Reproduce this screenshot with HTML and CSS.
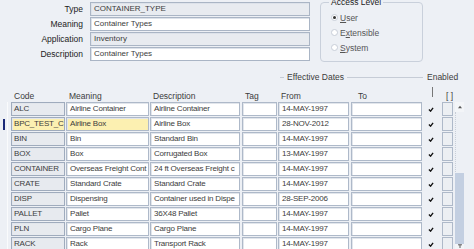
FILE: index.html
```html
<!DOCTYPE html>
<html lang="en">
<head>
  <meta charset="UTF-8">
  <title>Lookups</title>
  <link rel="stylesheet" href="styles.css">
</head>
<body>
  <div class="screen">
    <div class="top">
      <div class="form">
        <label>Type</label><div class="fld ro">CONTAINER_TYPE</div>
        <label>Meaning</label><div class="fld">Container Types</div>
        <label>Application</label><div class="fld ro">Inventory</div>
        <label>Description</label><div class="fld">Container Types</div>
      </div>
      <fieldset class="access">
        <legend>Access Level</legend>
        <div class="radio on"><span class="dot"></span><span><u>U</u>ser</span></div>
        <div class="radio"><span class="dot"></span><span>E<u>x</u>tensible</span></div>
        <div class="radio"><span class="dot"></span><span><u>S</u>ystem</span></div>
      </fieldset>
    </div>

    <div class="groups">
      <div class="eff"><span class="ln short"></span><span>Effective Dates</span><span class="ln"></span></div>
      <div class="enabled">Enabled</div>
    </div>

    <div class="heads">
      <span class="h ind"></span>
      <span class="h code">Code</span>
      <span class="h meaning">Meaning</span>
      <span class="h desc">Description</span>
      <span class="h tag">Tag</span>
      <span class="h from">From</span>
      <span class="h to">To</span>
      <span class="h chk"><i class="tick"></i></span>
      <span class="h brk">[ ]</span>
    </div>

    <div class="body">
      <div class="rows">
        <div class="row"><span class="ind"></span><div class="c code">ALC</div><div class="c meaning">Airline Container</div><div class="c desc">Airline Container</div><div class="c tag"></div><div class="c from">14-MAY-1997</div><div class="c to"></div><div class="chk"><svg viewBox="0 0 7 6"><path d="M1 3l2 2 3-4"/></svg></div><div class="c brk"></div></div>
        <div class="row cur"><span class="ind"></span><div class="c code">BPC_TEST_C</div><div class="c meaning">Airline Box</div><div class="c desc">Airline Box</div><div class="c tag"></div><div class="c from">28-NOV-2012</div><div class="c to"></div><div class="chk"><svg viewBox="0 0 7 6"><path d="M1 3l2 2 3-4"/></svg></div><div class="c brk"></div></div>
        <div class="row"><span class="ind"></span><div class="c code">BIN</div><div class="c meaning">Bin</div><div class="c desc">Standard Bin</div><div class="c tag"></div><div class="c from">14-MAY-1997</div><div class="c to"></div><div class="chk"><svg viewBox="0 0 7 6"><path d="M1 3l2 2 3-4"/></svg></div><div class="c brk"></div></div>
        <div class="row"><span class="ind"></span><div class="c code">BOX</div><div class="c meaning">Box</div><div class="c desc">Corrugated Box</div><div class="c tag"></div><div class="c from">13-MAY-1997</div><div class="c to"></div><div class="chk"><svg viewBox="0 0 7 6"><path d="M1 3l2 2 3-4"/></svg></div><div class="c brk"></div></div>
        <div class="row"><span class="ind"></span><div class="c code">CONTAINER</div><div class="c meaning">Overseas Freight Cont</div><div class="c desc">24 ft Overseas Freight c</div><div class="c tag"></div><div class="c from">14-MAY-1997</div><div class="c to"></div><div class="chk"><svg viewBox="0 0 7 6"><path d="M1 3l2 2 3-4"/></svg></div><div class="c brk"></div></div>
        <div class="row"><span class="ind"></span><div class="c code">CRATE</div><div class="c meaning">Standard Crate</div><div class="c desc">Standard Crate</div><div class="c tag"></div><div class="c from">14-MAY-1997</div><div class="c to"></div><div class="chk"><svg viewBox="0 0 7 6"><path d="M1 3l2 2 3-4"/></svg></div><div class="c brk"></div></div>
        <div class="row"><span class="ind"></span><div class="c code">DISP</div><div class="c meaning">Dispensing</div><div class="c desc">Container used in Dispe</div><div class="c tag"></div><div class="c from">28-SEP-2006</div><div class="c to"></div><div class="chk"><svg viewBox="0 0 7 6"><path d="M1 3l2 2 3-4"/></svg></div><div class="c brk"></div></div>
        <div class="row"><span class="ind"></span><div class="c code">PALLET</div><div class="c meaning">Pallet</div><div class="c desc">36X48 Pallet</div><div class="c tag"></div><div class="c from">14-MAY-1997</div><div class="c to"></div><div class="chk"><svg viewBox="0 0 7 6"><path d="M1 3l2 2 3-4"/></svg></div><div class="c brk"></div></div>
        <div class="row"><span class="ind"></span><div class="c code">PLN</div><div class="c meaning">Cargo Plane</div><div class="c desc">Cargo Plane</div><div class="c tag"></div><div class="c from">14-MAY-1997</div><div class="c to"></div><div class="chk"><svg viewBox="0 0 7 6"><path d="M1 3l2 2 3-4"/></svg></div><div class="c brk"></div></div>
        <div class="row"><span class="ind"></span><div class="c code">RACK</div><div class="c meaning">Rack</div><div class="c desc">Transport Rack</div><div class="c tag"></div><div class="c from">14-MAY-1997</div><div class="c to"></div><div class="chk"><svg viewBox="0 0 7 6"><path d="M1 3l2 2 3-4"/></svg></div><div class="c brk"></div></div>
      </div>
      <div class="scroll">
        <div class="arrow up"><svg viewBox="0 0 7 5"><path d="M1 4l2.5-3 2.5 3z"/></svg></div>
        <div class="track"></div>
        <div class="thumb"></div>
        <div class="arrow down"><svg viewBox="0 0 7 5"><path d="M1 1h5M3.5 1v4"/></svg></div>
      </div>
    </div>
  </div>
</body>
</html>
```

FILE: styles.css
```css
body {
  margin: 0;
  background: #edf0f5;
  font-family: 'Liberation Sans', Arial, sans-serif;
  font-size: 8px;
  color: #3c3c3c;
}

.screen {
  width: 474px;
  height: 249px;
  overflow: hidden;
}

/* header form */
.top {
  display: flex;
  height: 69px;
}
.form {
  display: grid;
  grid-template-columns: 83px 220px;
  grid-auto-rows: 14px;
  column-gap: 7px;
  row-gap: 1px;
  padding-top: 2px;
}
.form label {
  text-align: right;
  line-height: 14px;
  font-size: 8.5px;
  color: #222;
}
.fld {
  box-sizing: border-box;
  border: 1px solid #aab5c5;
  background: #fff;
  line-height: 12px;
  padding-left: 3px;
  box-shadow: inset 1px 1px 0 #dde2ea;
}
.fld.ro {background: #e8ebf0;}

.access {
  box-sizing: border-box;
  margin: -3px 0 0 10px;
  padding: 3px 0 0 10px;
  width: 103px;
  height: 65px;
  border: 1px solid #c9d0db;
  border-radius: 4px;
}
.access legend {
  padding: 0 2px;
  margin-left: -2px;
  font-size: 8.5px;
  color: #222;
}
.radio {
  display: flex;
  align-items: center;
  height: 15px;
  font-size: 8.5px;
  color: #555;
}
.radio .dot {
  position: relative;
  width: 5px;
  height: 5px;
  margin-right: 2px;
  border-radius: 50%;
  border: 1px solid #c8ced8;
  background: #fff;
}
.radio.on .dot::after {
  content: '';
  position: absolute;
  top: 1px;
  left: 1px;
  width: 3px;
  height: 3px;
  border-radius: 50%;
  background: #333;
}

/* group + column headers */
.groups {
  display: flex;
  align-items: center;
  height: 16px;
  padding-left: 280px;
  font-size: 8.5px;
}
.eff {
  display: flex;
  align-items: center;
  width: 143px;
  gap: 3px;
}
.eff .ln {
  flex: 1;
  height: 1px;
  background: #c6ccd6;
}
.eff .ln.short {flex: 0 0 4px;}
.enabled {margin-left: 4px;}

.heads {
  display: flex;
  height: 17px;
  align-items: flex-end;
  line-height: 11px;
  font-size: 8.5px;
}
.heads .h {padding-left: 3px; box-sizing: border-box; flex-shrink: 0;}
.heads .to {padding-left: 7px;}
.heads .chk {
  display: flex;
  justify-content: center;
  align-self: stretch;
  padding: 0 !important;
}
.heads .tick {
  display: block;
  width: 1px;
  height: 10px;
  background: #777;
}
.heads .brk {padding-left: 2px; margin-left: 2px;}

/* rows */
.body {
  display: flex;
  align-items: flex-start;
}
.row {
  display: flex;
  height: 15px;
}
.ind {
  flex: 0 0 auto;
  box-sizing: border-box;
  width: 8px;
  margin-right: 3px;
  border-right: 1px solid #fafbfc;
}
.row .ind {position: relative;}
.row.cur .ind::before {
  content: '';
  position: absolute;
  left: 3px;
  top: 2px;
  width: 2px;
  height: 11px;
  background: #1b2a78;
}
.c {
  box-sizing: border-box;
  height: 14px;
  flex-shrink: 0;
  border: 1px solid #aeb9c9;
  background: #fff;
  line-height: 12px;
  padding-left: 3px;
  letter-spacing: -0.2px;
  white-space: nowrap;
  overflow: hidden;
  box-shadow: inset 1px 1px 0 #e2e6ec;
}
.code {width: 54px; margin-right: 1px;}
.c.code {background: #e7eaef; border-color: #9fabbd; padding-left: 2px;}
.row.cur .code, .row.cur .meaning {background: #fcf0b1;}
.meaning {width: 83px; margin-right: 1px;}
.desc {width: 90px; margin-right: 2px;}
.tag {width: 35px; margin-right: 1px;}
.from {width: 71px; margin-right: 2px;}
.to {width: 71px;}
.chk {
  width: 20px;
  height: 14px;
  flex-shrink: 0;
  display: flex;
  align-items: center;
  padding-left: 6px;
  box-sizing: border-box;
}
.chk svg {
  width: 6px;
  height: 5px;
  fill: none;
  stroke: #111;
  stroke-width: 1.6;
}
.heads .chk {width: 20px;}
.c.brk {width: 11px; background: #eceff3; box-shadow: none;}
.heads .brk {width: 11px;}

/* scrollbar */
.scroll {
  position: relative;
  width: 9px;
  height: 150px;
  margin-left: 2px;
  display: flex;
  flex-direction: column;
}
.arrow {
  height: 10px;
  display: flex;
  align-items: center;
  justify-content: center;
  background: #f3f5f8;
}
.arrow svg {width: 6px; height: 4px;}
.arrow.up svg {fill: #555;}
.arrow.down svg {fill: none; stroke: #555; stroke-width: 1.2;}
.track {
  flex: 1;
  border-left: 1px dotted #c9cfd8;
}
.thumb {
  position: absolute;
  left: 0;
  right: 0;
  top: 71px;
  bottom: 8px;
  background: #c3cfe1;
}
.arrow.down {height: 8px; align-items: flex-start;}
```
